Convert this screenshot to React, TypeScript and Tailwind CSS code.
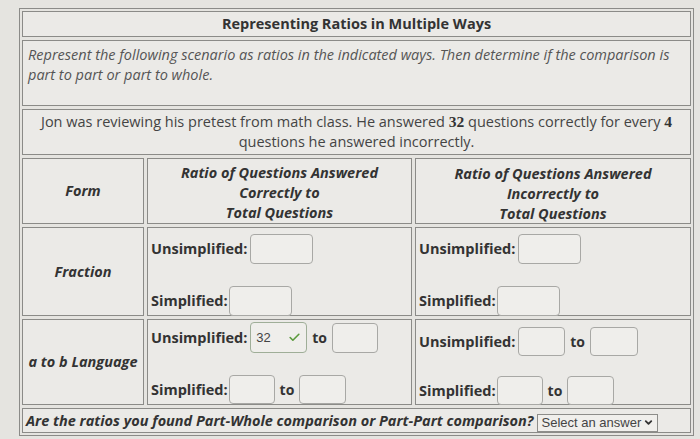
import { ChevronDown, Check } from "lucide-react";

const CELL = "border border-[#8b8b88] bg-[#ebeae7]";
const BOX = "rounded-[4px] border border-[#a8a8a5] bg-[#efeeeb]";

function Label({ text }: { text: string }) {
  return <span className="mr-[3px] font-bold text-[14.5px] text-[#333]">{text}</span>;
}

function To() {
  return <span className="mx-[5px] font-bold text-[14px] text-[#333]">to</span>;
}

export default function App() {
  return (
    <main className="w-[700px] h-[439px] bg-[#e5e4e0] overflow-hidden font-['Open_Sans',sans-serif] text-[#333]">
      <div className="ml-[19px] mt-[8px] w-[675px] border border-[#8b8b88] p-[2px] grid grid-cols-[122px_265px_276px] gap-[3px]">
        {/* ── Title ─────────────────────────────── */}
        <div className={`${CELL} col-span-3 h-[26px] flex items-center justify-center font-bold text-[14.5px]`}>
          Representing Ratios in Multiple Ways
        </div>

        {/* ── Instructions ──────────────────────── */}
        <div className={`${CELL} col-span-3 h-[66px] px-[5px] pt-[4px] italic text-[14.5px] leading-[20px] text-[#555]`}>
          Represent the following scenario as ratios in the indicated ways. Then determine if the comparison is
          <br />
          part to part or part to whole.
        </div>

        {/* ── Scenario ──────────────────────────── */}
        <div className={`${CELL} col-span-3 h-[46px] px-[8px] pt-[2px] text-center text-[14.5px] leading-[20px] text-[#444]`}>
          Jon was reviewing his pretest from math class. He answered{" "}
          <span className="font-['Liberation_Serif',serif] font-semibold text-[15.5px] text-[#333]">32</span> questions
          correctly for every{" "}
          <span className="font-['Liberation_Serif',serif] font-semibold text-[15.5px] text-[#333]">4</span>
          <br />
          questions he answered incorrectly.
        </div>

        {/* ── Header row ────────────────────────── */}
        <div className={`${CELL} h-[66px] flex items-center justify-center font-bold italic text-[14.5px]`}>Form</div>
        <div className={`${CELL} h-[66px] pt-[4px] text-center font-bold italic text-[14.5px] leading-[20px]`}>
          Ratio of Questions Answered
          <br />
          Correctly to
          <br />
          Total Questions
        </div>
        <div className={`${CELL} h-[66px] pt-[5px] text-center font-bold italic text-[14.5px] leading-[20px]`}>
          Ratio of Questions Answered
          <br />
          Incorrectly to
          <br />
          Total Questions
        </div>

        {/* ── Fraction row ──────────────────────── */}
        <div className={`${CELL} h-[89px] flex items-center justify-center font-bold italic text-[14.5px]`}>Fraction</div>
        {[0, 1].map((i) => (
          <div key={i} className={`${CELL} h-[89px] pl-[3px] pt-[6px] flex flex-col gap-[22px]`}>
            <div className="flex items-center h-[30px]">
              <Label text="Unsimplified:" />
              <div className={`${BOX} w-[63px] h-[30px]`} />
            </div>
            <div className="flex items-center h-[30px]">
              <span className="font-bold text-[14.5px] text-[#333] mr-[1px]">Simplified:</span>
              <div className={`${BOX} w-[63px] h-[30px]`} />
            </div>
          </div>
        ))}

        {/* ── a to b row ────────────────────────── */}
        <div className={`${CELL} h-[86px] flex items-center justify-center font-bold italic text-[14.5px]`}>
          a to b Language
        </div>
        <div className={`${CELL} h-[86px] pl-[3px] pt-[2px] flex flex-col gap-[22px]`}>
          <div className="flex items-center h-[31px]">
            <Label text="Unsimplified:" />
            <div className="w-[57px] h-[31px] rounded-[4px] border border-[#9fae98] bg-[#efeeeb] flex items-center justify-between px-[5px]">
              <span className="font-['Liberation_Sans',sans-serif] text-[13px] text-[#444]">32</span>
              <Check className="w-[13px] h-[13px] text-[#5a9a3c]" strokeWidth={3} />
            </div>
            <To />
            <div className={`${BOX} w-[46px] h-[30px]`} />
          </div>
          <div className="flex items-center h-[29px]">
            <span className="font-bold text-[14.5px] text-[#333] mr-[1px]">Simplified:</span>
            <div className={`${BOX} w-[46px] h-[29px]`} />
            <To />
            <div className={`${BOX} w-[47px] h-[29px]`} />
          </div>
        </div>
        <div className={`${CELL} h-[86px] pl-[3px] pt-[7px] flex flex-col gap-[20px]`}>
          <div className="flex items-center h-[29px]">
            <Label text="Unsimplified:" />
            <div className={`${BOX} w-[47px] h-[29px]`} />
            <To />
            <div className={`${BOX} w-[48px] h-[29px]`} />
          </div>
          <div className="flex items-center h-[29px]">
            <span className="font-bold text-[14.5px] text-[#333] mr-[1px]">Simplified:</span>
            <div className={`${BOX} w-[46px] h-[29px]`} />
            <To />
            <div className={`${BOX} w-[47px] h-[29px]`} />
          </div>
        </div>

        {/* ── Question row ──────────────────────── */}
        <div className={`${CELL} col-span-3 h-[25px] pl-[3px] flex items-center`}>
          <span className="font-bold italic text-[14.5px] text-[#333]">
            Are the ratios you found Part-Whole comparison or Part-Part comparison?
          </span>
          <div className="ml-[4px] mt-[4px] h-[18px] w-[121px] border border-[#8d8d8a] bg-[#f0efec] flex items-center justify-between px-[3px] font-['Liberation_Sans',sans-serif] text-[13px] text-[#444]">
            Select an answer
            <ChevronDown className="w-[11px] h-[11px] text-[#333]" strokeWidth={4} />
          </div>
        </div>
      </div>
    </main>
  );
}
